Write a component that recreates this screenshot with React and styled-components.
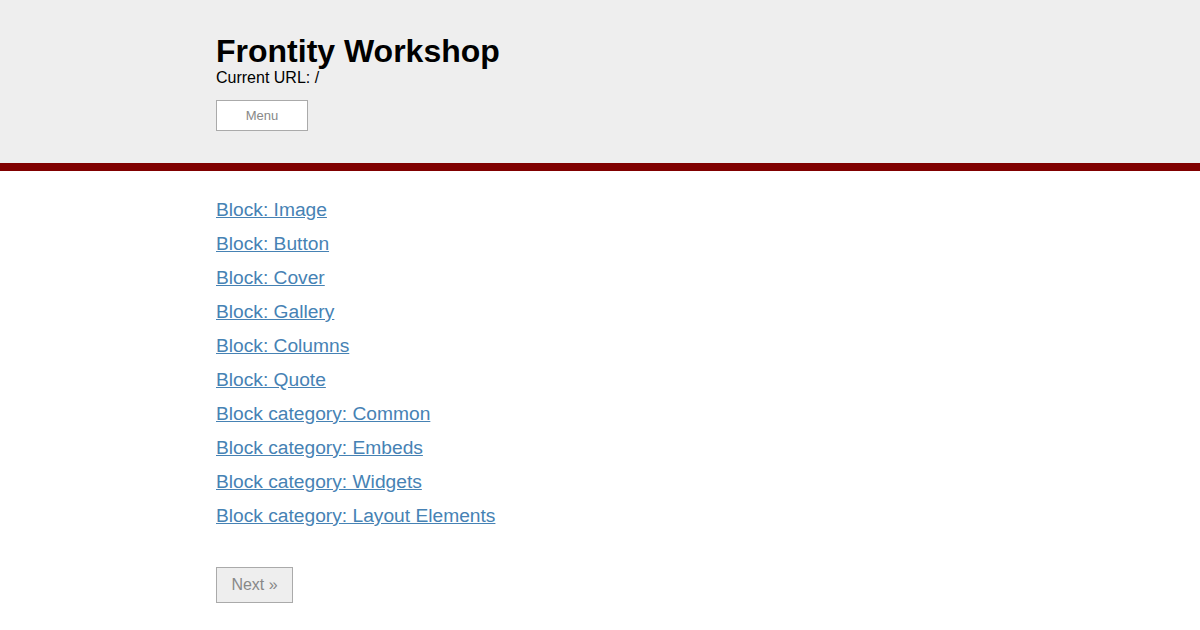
import React from 'react'
import styled, {createGlobalStyle} from 'styled-components'

const links = [
    'Block: Image',
    'Block: Button',
    'Block: Cover',
    'Block: Gallery',
    'Block: Columns',
    'Block: Quote',
    'Block category: Common',
    'Block category: Embeds',
    'Block category: Widgets',
    'Block category: Layout Elements',
]

const App = () => {
    return (
        <>
            <GlobalStyle />
            <HeadContainer>
                <Container>
                    <Title>Frontity Workshop</Title>
                    <Url>Current URL: /</Url>
                    <MenuButton>Menu</MenuButton>
                </Container>
            </HeadContainer>
            <Main>
                <Container>
                    <List>
                        {links.map(link => (
                            <Item key={link}>
                                <Link href="#">{link}</Link>
                            </Item>
                        ))}
                    </List>
                    <NextButton>Next »</NextButton>
                </Container>
            </Main>
        </>
    )
}

export default App

const GlobalStyle = createGlobalStyle`
body {
    margin: 0;
    background: #fff;
    font-family: "Liberation Sans", Arial, sans-serif;
    color: #000;
}
`

const Container = styled.div`
width: 768px;
margin: 0 auto;
`

const HeadContainer = styled.header`
background: #eee;
border-bottom: 8px solid maroon;
padding: 33px 0 32px;
`

const Title = styled.h1`
margin: 0;
font-size: 32px;
line-height: 36px;
font-weight: bold;
`

const Url = styled.p`
margin: 0;
font-size: 16px;
line-height: 18px;
`

const MenuButton = styled.button`
display: block;
margin-top: 13px;
width: 92px;
height: 31px;
padding: 0;
background: #fff;
border: 1px solid #aaa;
color: #888;
font-family: "Liberation Sans", Arial, sans-serif;
font-size: 13px;
`

const Main = styled.main`
padding: 22px 0 20px;
`

const List = styled.div`
display: flex;
flex-direction: column;
`

const Item = styled.div`
height: 34px;
line-height: 34px;
font-size: 19.2px;
`

const Link = styled.a`
color: steelblue;
text-decoration: underline;
`

const NextButton = styled.button`
display: block;
margin-top: 34px;
width: 77px;
padding: 8px 0;
line-height: 18px;
background: #eee;
border: 1px solid #aaa;
color: #888;
font-family: "Liberation Sans", Arial, sans-serif;
font-size: 16px;
`
